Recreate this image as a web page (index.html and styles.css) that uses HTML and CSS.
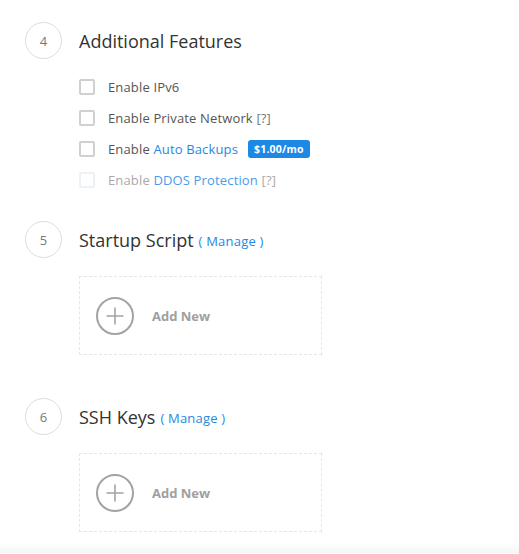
FILE: index.html
```html
<!DOCTYPE html>
<html lang="en">
<head>
  <meta charset="UTF-8" />
  <meta name="viewport" content="width=device-width, initial-scale=1.0" />
  <title>Deploy - Options</title>
  <link rel="stylesheet" href="styles.css">
</head>
<body>
  <section class="step step-features">
    <div class="step-num">4</div>
    <h2 class="step-title">Additional Features</h2>
    <ul class="checklist">
      <li><span class="check"></span><span>Enable IPv6</span></li>
      <li><span class="check"></span><span>Enable Private Network <span class="help">[?]</span></span></li>
      <li><span class="check"></span><span>Enable <a href="#">Auto Backups</a></span><span class="badge">$1.00/mo</span></li>
      <li class="disabled"><span class="check"></span><span>Enable <a href="#">DDOS Protection</a> <span class="help">[?]</span></span></li>
    </ul>
  </section>

  <section class="step">
    <div class="step-num">5</div>
    <h2 class="step-title">Startup Script <a class="manage" href="#">( Manage )</a></h2>
    <div class="add-box">
      <svg class="add-icon" width="38" height="38" viewBox="0 0 38 38">
        <circle cx="19" cy="19" r="18" fill="none" stroke="#a3a3a3" stroke-width="2"/>
        <path d="M19 10.5v17M10.5 19h17" stroke="#a3a3a3" stroke-width="1.6"/>
      </svg>
      <span>Add New</span>
    </div>
  </section>

  <section class="step">
    <div class="step-num">6</div>
    <h2 class="step-title">SSH Keys <a class="manage" href="#">( Manage )</a></h2>
    <div class="add-box">
      <svg class="add-icon" width="38" height="38" viewBox="0 0 38 38">
        <circle cx="19" cy="19" r="18" fill="none" stroke="#a3a3a3" stroke-width="2"/>
        <path d="M19 10.5v17M10.5 19h17" stroke="#a3a3a3" stroke-width="1.6"/>
      </svg>
      <span>Add New</span>
    </div>
  </section>

  <footer></footer>
</body>
</html>
```

FILE: styles.css
```css
body {
  margin: 0;
  padding: 22px 0 0 25px;
  font-family: "Open Sans", Arial, sans-serif;
  background-color: #fff;
  color: #333;
}

a {
  color: #1e88e5;
  text-decoration: none;
}

.step {
  display: grid;
  grid-template-columns: 37px 1fr;
  column-gap: 17px;
  margin-bottom: 43px;
}

.step-features {
  margin-bottom: 26px;
}

.step-num {
  width: 35px;
  height: 35px;
  border: 1px solid #ddd;
  border-radius: 50%;
  display: flex;
  align-items: center;
  justify-content: center;
  font-size: 13px;
  color: #777;
}

.step-title {
  margin: 0;
  display: flex;
  align-items: center;
  gap: 5px;
  font-size: 18px;
  font-weight: 500;
  color: #333;
}

.manage {
  font-size: 13px;
  padding-top: 3px;
  letter-spacing: 0.2px;
}

.checklist {
  grid-column: 2;
  list-style: none;
  margin: 12px 0 0;
  padding: 0;
}

.checklist li {
  height: 31px;
  display: flex;
  align-items: center;
  font-size: 13px;
  letter-spacing: 0.15px;
  color: #555;
}

.check {
  width: 12px;
  height: 12px;
  border: 2px solid #cfd0d2;
  border-radius: 2px;
  margin-right: 13px;
}

.help {
  color: #777;
}

.badge {
  margin-left: 10px;
  background-color: #1e88e5;
  color: white;
  font-size: 10.5px;
  font-weight: bold;
  letter-spacing: 0.2px;
  padding: 2px 6px;
  border-radius: 3px;
  line-height: 14px;
}

.checklist .disabled {
  color: #aaa;
}

.disabled .check {
  border-color: #eef1f4;
}

.disabled a {
  color: #4a9ce8;
}

.disabled .help {
  color: #aaa;
}

.add-box {
  grid-column: 2;
  margin-top: 18px;
  width: 225px;
  height: 77px;
  padding-left: 16px;
  border: 1px dashed #e6e6e6;
  display: flex;
  align-items: center;
  gap: 18px;
  font-size: 13px;
  font-weight: bold;
  color: #a0a0a0;
}

footer {
  margin-left: -25px;
  margin-top: -33px;
  height: 11px;
  background: linear-gradient(#fff, #f5f5f5);
}
```
